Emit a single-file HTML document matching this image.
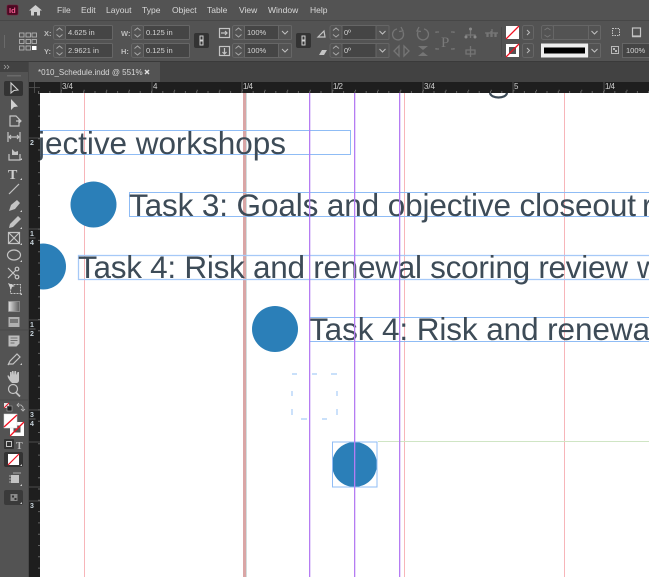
<!DOCTYPE html>
<html><head><meta charset="utf-8"><style>
html,body{margin:0;padding:0;background:#535353;width:649px;height:577px;overflow:hidden}
svg{display:block;font-family:"Liberation Sans",sans-serif;filter:blur(.3px)}
.m{font-size:8.5px;fill:#d8d8d8}
.f{font-size:7.5px;fill:#d4d4d4}
.l{font-size:7.5px;fill:#bdbdbd;font-weight:bold}
.r{font-size:8px;fill:#d0d0d0}
.b{fill:#454545;stroke:#666;stroke-width:1}
.s{fill:#535353;stroke:#666;stroke-width:1}
.i{fill:none;stroke:#c4c4c4;stroke-width:1.2}
.d{fill:none;stroke:#757575;stroke-width:1.3}
.t{font-size:31.5px;fill:#3d4b57}
</style></head><body>
<svg width="649" height="577" viewBox="0 0 649 577" xmlns="http://www.w3.org/2000/svg">
<defs>
<g id="sp"><rect class="s" x="0" y="0" width="12" height="14" rx="2"/><path d="M3 5l3-2.500 3 2.500M3 9l3 2.500 3-2.500" fill="none" stroke="#aaa" stroke-width=".9"/></g>
<g id="chev"><path d="M0 0l3 3 3-3" fill="none" stroke="#c0c0c0" stroke-width="1"/></g>
<clipPath id="cv"><rect x="40" y="93" width="609" height="484"/></clipPath>
<linearGradient id="gr" x1="0" x2="1"><stop offset="0" stop-color="#e0e0e0"/><stop offset="1" stop-color="#5a5a5a"/></linearGradient>
</defs>

<!-- chrome -->
<rect width="649" height="577" fill="#535353"/>
<rect y="20" width="649" height="1" fill="#474747"/>
<rect y="61" width="649" height="21" fill="#424242"/>
<rect y="61" width="649" height="1" fill="#3a3a3a"/>
<rect x="29" y="62" width="131" height="20" fill="#535353"/>

<!-- menu -->
<rect x="7" y="5" width="11" height="10" rx="1.500" fill="#4a0a22" stroke="#7a1a3c" stroke-width=".6"/>
<text x="9" y="13" font-size="7.500" font-weight="bold" fill="#f75c93">Id</text>
<path d="M29 10.500l6.500-5.500 6.500 5.500h-2v5h-3v-3.500h-3v3.500h-3v-5z" fill="#cfcfcf"/>
<text class="m" x="57" y="13">File</text>
<text class="m" x="81" y="13">Edit</text>
<text class="m" x="106" y="13">Layout</text>
<text class="m" x="142" y="13">Type</text>
<text class="m" x="172" y="13">Object</text>
<text class="m" x="207" y="13">Table</text>
<text class="m" x="239" y="13">View</text>
<text class="m" x="268" y="13">Window</text>
<text class="m" x="310" y="13">Help</text>

<!-- control panel -->
<rect x="4" y="35" width="1" height="13" fill="#6a6a6a"/>
<g fill="none" stroke="#bdbdbd" stroke-width=".8">
<rect x="19.500" y="33" width="4.500" height="4"/><rect x="26" y="33" width="4.500" height="4"/><rect x="32" y="33" width="4.500" height="4"/>
<rect x="19.500" y="39.500" width="4.500" height="4"/><rect x="26" y="39.500" width="4.500" height="4"/><rect x="32" y="39.500" width="4.500" height="4"/>
<rect x="19.500" y="46" width="4.500" height="4"/><rect x="26" y="46" width="4.500" height="4"/></g>
<rect x="32" y="46" width="4.500" height="4" fill="#fff"/>
<text class="l" x="44" y="36">X:</text><text class="l" x="44" y="54">Y:</text>
<use href="#sp" x="53.500" y="25.500"/><use href="#sp" x="53.500" y="43.500"/>
<rect class="b" x="65.500" y="25.500" width="47" height="14" rx="1"/><rect class="b" x="65.500" y="43.500" width="47" height="14" rx="1"/>
<text class="f" x="68" y="35">4.625 in</text><text class="f" x="68" y="53">2.9621 in</text>
<text class="l" x="121" y="36">W:</text><text class="l" x="121" y="54">H:</text>
<use href="#sp" x="131.500" y="25.500"/><use href="#sp" x="131.500" y="43.500"/>
<rect class="b" x="143.500" y="25.500" width="46" height="14" rx="1"/><rect class="b" x="143.500" y="43.500" width="46" height="14" rx="1"/>
<text class="f" x="146" y="35">0.125 in</text><text class="f" x="146" y="53">0.125 in</text>
<rect x="194" y="33" width="15" height="15" rx="2" fill="#333"/>
<path d="M200 36h3v4h-3zM200 41h3v4h-3z" fill="none" stroke="#d0d0d0"/>
<rect x="219.500" y="28.500" width="10" height="9" class="i"/><path d="M221 33h6m-2-2l2 2-2 2" class="i"/>
<rect x="219.500" y="46.500" width="10" height="9" class="i"/><path d="M224.500 48v6m-2-2l2 2 2-2" class="i"/>
<use href="#sp" x="232.500" y="25.500"/><use href="#sp" x="232.500" y="43.500"/>
<rect class="b" x="244.500" y="25.500" width="34" height="14"/><rect class="b" x="244.500" y="43.500" width="34" height="14"/>
<rect class="s" x="278.500" y="25.500" width="13" height="14" rx="1"/><rect class="s" x="278.500" y="43.500" width="13" height="14" rx="1"/>
<use href="#chev" x="282" y="31"/><use href="#chev" x="282" y="49"/>
<text class="f" x="247" y="35">100%</text><text class="f" x="247" y="53">100%</text>
<rect x="296" y="33" width="15" height="15" rx="2" fill="#333"/>
<path d="M302 36h3v4h-3zM302 41h3v4h-3z" fill="none" stroke="#d0d0d0"/>
<path d="M318 37l6-6 1 6z" class="i"/>
<path d="M319 55l3-5h5l-3 5z" fill="#c4c4c4"/>
<use href="#sp" x="330" y="25.500"/><use href="#sp" x="330" y="43.500"/>
<rect class="b" x="342" y="25.500" width="34" height="14"/><rect class="b" x="342" y="43.500" width="34" height="14"/>
<rect class="s" x="376" y="25.500" width="13" height="14" rx="1"/><rect class="s" x="376" y="43.500" width="13" height="14" rx="1"/>
<use href="#chev" x="379.500" y="31"/><use href="#chev" x="379.500" y="49"/>
<text class="f" x="344" y="35">0º</text><text class="f" x="344" y="53">0º</text>
<path d="M397 29a5.500 5.500 0 1 0 6 3M401 27l2 4-4 .5" class="d"/>
<path d="M424 29a5.500 5.500 0 1 1-6 3M419 27l-2 4 4 .5" class="d"/>
<path d="M399 46v10l-5-5zM404 46v10l5-5z" class="d"/>
<path d="M418 46h10l-5 4zM418 56h10l-5-4z" fill="#757575"/>
<text x="441" y="47" font-family="Liberation Serif,serif" font-size="15" fill="#7a7a7a">P</text>
<path d="M436 33v-1h3M451 32h3v1M436 48v1h3M451 49h3v-1" class="d"/>
<g class="d"><path d="M470.500 28v5M466 38v-3h9v3M470.500 33v5"/></g>
<circle cx="470.500" cy="29" r="1.500" fill="#888"/><circle cx="466" cy="37" r="1.500" fill="#888"/><circle cx="475" cy="37" r="1.500" fill="#888"/>
<path d="M485 33h13M488 33v4M492 29v8M496 33v4" class="d"/>
<path d="M470.500 46v11M466 50h9v4h-9z" class="d"/>
<path d="M487 37v-4h11M491 31v6M495 33v4" class="d"/>
<line x1="501.500" y1="27" x2="501.500" y2="57" stroke="#484848"/>
<rect x="506" y="26" width="13" height="13" fill="#fff"/><line x1="506" y1="39" x2="519" y2="26" stroke="#f01020" stroke-width="1.300"/>
<rect x="506" y="44" width="13" height="13" fill="#fff"/><rect x="509" y="47" width="7" height="7" fill="#555"/><line x1="506" y1="57" x2="519" y2="44" stroke="#f01020" stroke-width="1.300"/>
<rect class="s" x="522.500" y="25.500" width="11" height="14" rx="2"/><rect class="s" x="522.500" y="43.500" width="11" height="14" rx="2"/>
<path d="M527 30l2.500 2.500-2.500 2.500M527 48l2.500 2.500-2.500 2.500" fill="none" stroke="#bbb"/>
<rect class="s" x="541.500" y="25.500" width="12" height="14" rx="2"/><path d="M544.500 30l3-2 3 2M544.500 35l3 2 3-2" fill="none" stroke="#777" stroke-width=".9"/>
<rect class="s" x="553.500" y="25.500" width="35" height="14"/><rect class="s" x="588.500" y="25.500" width="12" height="14" rx="1"/><use href="#chev" x="591.500" y="31"/>
<rect x="541" y="43.500" width="47" height="14" fill="#eee"/><rect x="544" y="47.500" width="41" height="6" fill="#000"/>
<rect class="s" x="588.500" y="43.500" width="12" height="14" rx="1"/><use href="#chev" x="591.500" y="49"/>
<rect x="612.500" y="28.500" width="7" height="7" fill="none" stroke="#c4c4c4" stroke-dasharray="1.500 1"/>
<rect x="632.500" y="28" width="8" height="8" class="i"/><path d="M632 36.500h9" stroke="#c4c4c4" stroke-width="1.500"/>
<rect x="611.500" y="46.500" width="7" height="7" fill="none" stroke="#b8b8b8"/><rect x="613" y="48" width="2" height="2" fill="#b8b8b8"/><rect x="615" y="50" width="2" height="2" fill="#b8b8b8"/>
<rect class="b" x="622.500" y="43.500" width="30" height="14"/><text class="f" x="626" y="53">100%</text>

<!-- tab -->
<text x="38" y="75" font-size="8" fill="#d8d8d8">*010_Schedule.indd @ 551%</text>
<path d="M145 70l4 4m0-4l-4 4" stroke="#e0e0e0" stroke-width="1.400"/>

<!-- tools top strip -->
<rect x="0" y="62" width="28" height="10" fill="#424242"/>
<path d="M4 65l2 2-2 2M7 65l2 2-2 2" fill="none" stroke="#aaa" stroke-width=".7"/>
<rect x="0" y="72" width="28" height="505" fill="#535353"/>
<rect x="7" y="75" width="14" height="1.500" fill="#6a6a6a"/>
<rect x="28" y="62" width="1" height="515" fill="#474747"/>

<!-- canvas -->
<rect x="40" y="93" width="609" height="484" fill="#fff"/>
<g clip-path="url(#cv)">
<rect x="84" y="93" width="1" height="484" fill="#f7b5b9"/>
<rect x="243" y="93" width="3" height="484" fill="#d9a6a6"/>
<rect x="246" y="93" width="1" height="484" fill="#d3dede"/>
<rect x="404" y="93" width="1" height="484" fill="#f7b5b9"/>
<rect x="564" y="93" width="1" height="484" fill="#f7b5b9"/>
<rect x="378" y="441" width="271" height="1" fill="#cfe5c4"/>
<path d="M490 93c1 6 16 6 17 0" fill="none" stroke="#3d4b57" stroke-width="2.200"/>

<rect x="30.500" y="130.500" width="320" height="24" fill="none" stroke="#8fbcf5"/>
<rect x="129.500" y="192.500" width="530" height="24" fill="none" stroke="#8fbcf5"/>
<rect x="78.500" y="255.500" width="590" height="24" fill="none" stroke="#a6c9f7" stroke-width="1.300"/>
<rect x="309.500" y="317.500" width="350" height="24" fill="none" stroke="#8fbcf5"/>

<text class="t" x="38" y="154" textLength="248" lengthAdjust="spacing">jective workshops</text>
<text class="t" x="129" y="216" textLength="507" lengthAdjust="spacing">Task 3: Goals and objective closeout</text>
<text class="t" x="642" y="216">r</text>
<text class="t" x="78" y="278" textLength="550" lengthAdjust="spacing">Task 4: Risk and renewal scoring review</text>
<text class="t" x="637" y="278">w</text>
<text class="t" x="309" y="340" textLength="341" lengthAdjust="spacing">Task 4: Risk and renewa</text>

<circle cx="93.500" cy="204.500" r="23" fill="#2b7fb8"/>
<circle cx="43" cy="266.500" r="23" fill="#2b7fb8"/>
<circle cx="275" cy="329" r="23" fill="#2b7fb8"/>
<circle cx="354.500" cy="464.500" r="22.500" fill="#2b7fb8"/>
<rect x="332.500" y="442" width="44.500" height="45" fill="none" stroke="#8fbcf5"/>

<rect x="309" y="93" width="1.300" height="484" fill="#b57cf2"/>
<rect x="354" y="93" width="1.300" height="484" fill="#b57cf2"/>
<rect x="399" y="93" width="1.300" height="484" fill="#b57cf2"/>

<path d="M292 374h5M312 374h5M331 374h6M292 391v5M337 391v5M292 409v6M337 409v6M301 419h6M322 419h5" fill="none" stroke="#a9cdf8" stroke-width="1.200"/>
</g>

<!-- rulers -->
<rect x="29" y="82" width="620" height="11" fill="#1e1e1e"/>
<rect x="29" y="82" width="11" height="495" fill="#1e1e1e"/>
<path d="M29 87.500h11M34.500 82v11" stroke="#555" stroke-width=".8"/>
<path d="M61 82v11M152 82v11M242 82v11M332 82v11M423 82v11M513 82v11M604 82v11" stroke="#5c5c5c" stroke-width=".8"/>
<line x1="38" y1="92" x2="649" y2="92" stroke="#666" stroke-width="2" stroke-dasharray="1 10.300"/>
<line x1="61" y1="90.500" x2="649" y2="90.500" stroke="#666" stroke-width="1.500" stroke-dasharray="1 21.620"/>
<text class="r" x="62" y="89" textLength="11">3/4</text>
<text class="r" x="153" y="89">4</text>
<text class="r" x="243" y="89" textLength="10">1/4</text>
<text class="r" x="333" y="89" textLength="10">1/2</text>
<text class="r" x="424" y="89" textLength="11">3/4</text>
<text class="r" x="514" y="89">5</text>
<text class="r" x="605" y="89" textLength="10">1/4</text>
<path d="M29 138h11M29 229h11M29 320h11M29 410h11M29 442h11M29 487h11M29 501h11" stroke="#5c5c5c" stroke-width=".8"/>
<line x1="39" y1="93" x2="39" y2="577" stroke="#666" stroke-width="2" stroke-dasharray="1 10.300"/>
<g font-size="7" font-weight="bold" fill="#c8d4dc">
<text x="30" y="145">2</text>
<text x="30" y="236">1</text><text x="30" y="245">4</text>
<text x="30" y="327">1</text><text x="30" y="336">2</text>
<text x="30" y="417">3</text><text x="30" y="426">4</text>
<text x="30" y="508">3</text>
</g>
<path d="M29.500 238h6M29.500 329h6M29.500 419h6" stroke="#aaa" stroke-width=".6"/>

<!-- tools -->
<rect x="4" y="81" width="19" height="15" rx="2" fill="#333"/>
<path d="M11 83v10l3-2.500 4-.5z" fill="none" stroke="#d0d0d0" stroke-width="1.100"/>
<path d="M11 99v11l3-3 4-.5z" fill="#cfcfcf"/>
<path d="M10 116h6l3 3v7h-9zM16 121h5m-2-2l2 2-2 2" class="i"/>
<path d="M8 132v10M20 132v10M9 137h10M9 137l2-2M9 137l2 2M19 137l-2-2M19 137l-2 2" class="i"/>
<path d="M9 154v6h11v-6" class="i"/><path d="M12 149l3 3 3-1v4h-6z" fill="#c4c4c4"/>
<text x="8" y="179" font-family="Liberation Serif,serif" font-size="14" font-weight="bold" fill="#cfcfcf">T</text>
<line x1="9" y1="194" x2="19" y2="184" class="i"/>
<path d="M9 211l2-6 6-5 3 3-5 6z" fill="#c4c4c4"/>
<path d="M9 228l1-4 8-8 3 3-8 8z" fill="#c4c4c4"/>
<path d="M8.500 232.500h11v11h-11zM8.500 232.500l11 11M19.500 232.500l-11 11" class="i"/>
<ellipse cx="14" cy="255" rx="6.500" ry="5" class="i"/>
<circle cx="17" cy="269" r="1.800" class="i"/><circle cx="17" cy="277" r="1.800" class="i"/><path d="M8 268l8 8M8 278l8-8" class="i"/>
<rect x="10.500" y="284.500" width="10" height="9" fill="none" stroke="#c4c4c4" stroke-dasharray="2 1"/><path d="M8 283l7 3-3 1-1 3z" fill="#cfcfcf"/>
<rect x="8.500" y="301.500" width="11" height="10" fill="url(#gr)" stroke="#999" stroke-width=".7"/>
<rect x="8.500" y="317" width="11" height="10" fill="#b0b0b0"/><rect x="10" y="319" width="8" height="4" fill="#777"/>
<line x1="0" y1="330" x2="28" y2="330" stroke="#4a4a4a"/>
<path d="M8.500 335.500h11v8l-3 3h-8z" fill="#bdbdbd"/><path d="M10.500 338h7M10.500 340.500h7M10.500 343h4" stroke="#555" stroke-width=".8"/>
<path d="M9 364l-1 1 2-4 7-7 3 3-7 7z" class="i"/>
<path d="M10 381c-2-3-3-5-2-6l2 2v-5h1.500v3l.5-4h1.500l.5 4 .5-4h1.500l.5 4 1-3h1.500v8c0 2-1 3-3 3h-4z" fill="#c4c4c4"/>
<circle cx="13" cy="389" r="4.500" class="i"/><path d="M16 392.500l4 4" stroke="#c4c4c4" stroke-width="1.800"/>
<line x1="0" y1="400" x2="28" y2="400" stroke="#4a4a4a"/>
<rect x="4" y="403" width="5" height="5" fill="#e8e8e8"/><rect x="7" y="406" width="5" height="5" fill="#222" stroke="#bbb" stroke-width=".5"/><line x1="4" y1="408" x2="9" y2="403" stroke="#f01020"/>
<path d="M18 405h3l2 2v3M19 403l-2 2 2 2M21 409l2 2 2-2" fill="none" stroke="#c4c4c4" stroke-width=".8"/>
<rect x="10" y="422" width="14" height="14" fill="#fff"/><rect x="13.500" y="425.500" width="7" height="7" fill="#555"/><line x1="10" y1="436" x2="24" y2="422" stroke="#f01020" stroke-width="1.300"/>
<rect x="4" y="414" width="13" height="14" fill="#fff" stroke="#ddd" stroke-width=".5"/><line x1="4" y1="427" x2="17" y2="415" stroke="#f01020" stroke-width="1.300"/>
<rect x="4" y="439" width="10" height="10" rx="1" fill="#333"/><rect x="6.500" y="441.500" width="5" height="5" fill="none" stroke="#c4c4c4"/>
<text x="16" y="449" font-family="Liberation Serif,serif" font-size="10" font-weight="bold" fill="#bcbcbc">T</text>
<rect x="4" y="452" width="19" height="15" rx="2" fill="#333"/>
<rect x="8" y="454" width="11" height="11" fill="#fff"/><line x1="8" y1="465" x2="19" y2="454" stroke="#f01020" stroke-width="1.200"/>
<rect x="11" y="475" width="8" height="8" fill="#c4c4c4"/><path d="M9 476h2M9 479h2M9 482h2M13 473h8" stroke="#aaa"/>
<rect x="4" y="490" width="19" height="15" rx="2" fill="#3a3a3a"/>
<rect x="10.500" y="494" width="7" height="7" fill="#8a8a8a"/><rect x="12" y="495.500" width="2" height="2" fill="#333"/><rect x="14.500" y="498" width="2" height="2" fill="#333"/>
<path d="M22 466h-2l2-2zM22 504h-2l2-2zM22 486h-2l2-2z" fill="#d0d0d0"/>
<path d="M22 160h-2l2-2zM22 180h-2l2-2zM22 212h-2l2-2zM22 229h-2l2-2zM22 245h-2l2-2zM22 262h-2l2-2zM22 295h-2l2-2zM22 365h-2l2-2z" fill="#d0d0d0"/>
</svg>
</body></html>
